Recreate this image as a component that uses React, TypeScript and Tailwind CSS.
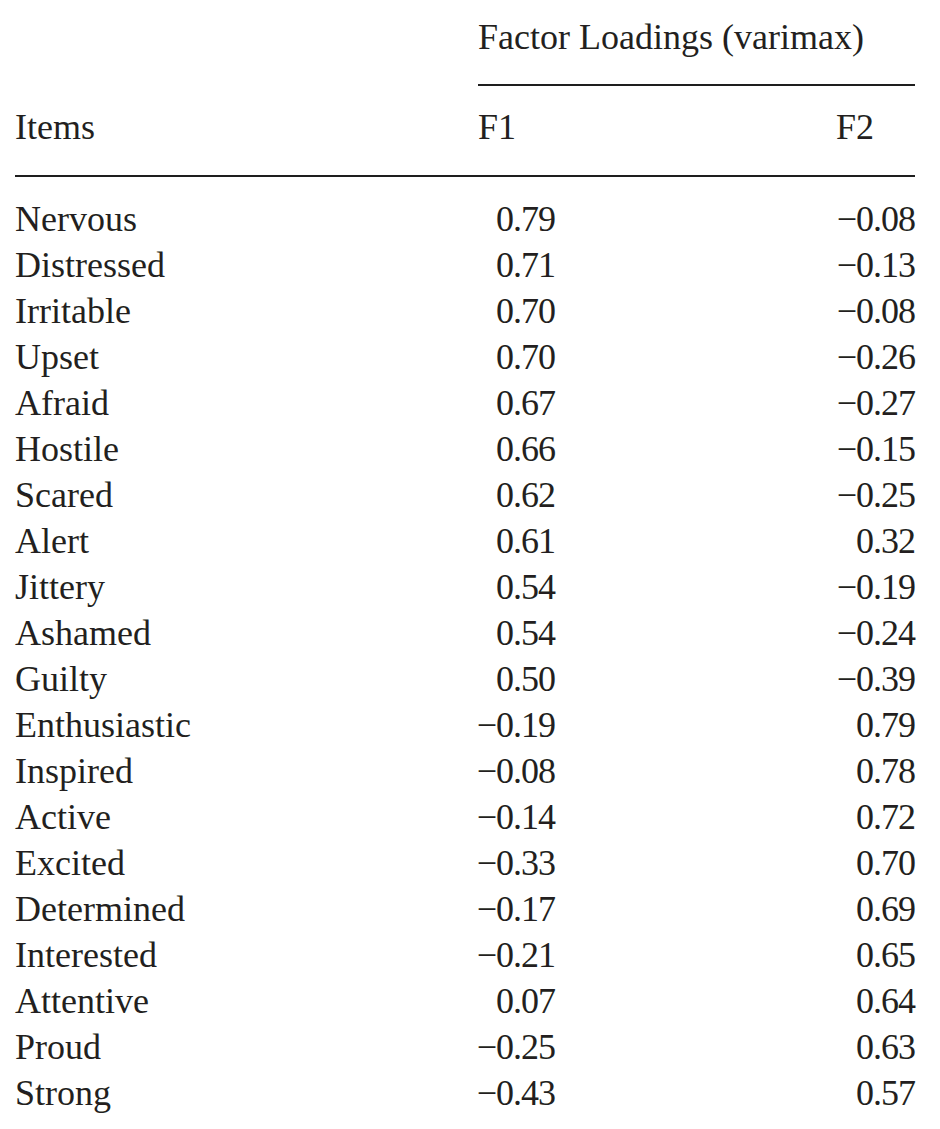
import React from 'react';

// Chargements factoriels (rotation varimax)
const rows: [string, string, string][] = [
  ['Nervous', '0.79', '−0.08'],
  ['Distressed', '0.71', '−0.13'],
  ['Irritable', '0.70', '−0.08'],
  ['Upset', '0.70', '−0.26'],
  ['Afraid', '0.67', '−0.27'],
  ['Hostile', '0.66', '−0.15'],
  ['Scared', '0.62', '−0.25'],
  ['Alert', '0.61', '0.32'],
  ['Jittery', '0.54', '−0.19'],
  ['Ashamed', '0.54', '−0.24'],
  ['Guilty', '0.50', '−0.39'],
  ['Enthusiastic', '−0.19', '0.79'],
  ['Inspired', '−0.08', '0.78'],
  ['Active', '−0.14', '0.72'],
  ['Excited', '−0.33', '0.70'],
  ['Determined', '−0.17', '0.69'],
  ['Interested', '−0.21', '0.65'],
  ['Attentive', '0.07', '0.64'],
  ['Proud', '−0.25', '0.63'],
  ['Strong', '−0.43', '0.57'],
];

const Num = ({ v }: { v: string }) => (
  <div className="flex justify-end whitespace-nowrap tracking-[-1px]">
    <span>{v}</span>
  </div>
);

const Row = ({ item, f1, f2 }: { item: string; f1: string; f2: string }) => (
  <div className="grid grid-cols-[463px_77px_1fr_77px] h-[46px] leading-[46px]">
    <div>{item}</div>
    <Num v={f1} />
    <div />
    <Num v={f2} />
  </div>
);

export default function App() {
  return (
    <div className="w-[940px] h-[1129px] bg-white pl-[15px] pr-[25px] pt-[14px] text-[36px] text-[#231f20] font-['Liberation_Serif',serif] overflow-hidden">
      <div className="grid grid-cols-[463px_1fr] h-[46px] leading-[46px]">
        <div />
        <div className="whitespace-nowrap">Factor Loadings (varimax)</div>
      </div>
      <div className="grid grid-cols-[463px_1fr] mt-[24px]">
        <div />
        <div className="h-[2px] bg-[#1e1e1e]" />
      </div>
      <div className="grid grid-cols-[463px_77px_1fr_77px] h-[46px] leading-[46px] mt-[18px]">
        <div>Items</div>
        <div>F1</div>
        <div />
        <div className="-ml-[2px]">F2</div>
      </div>
      <div className="h-[2px] bg-[#1e1e1e] mt-[25px] mb-[19px]" />
      {rows.map(([item, f1, f2]) => (
        <Row key={item} item={item} f1={f1} f2={f2} />
      ))}
    </div>
  );
}
